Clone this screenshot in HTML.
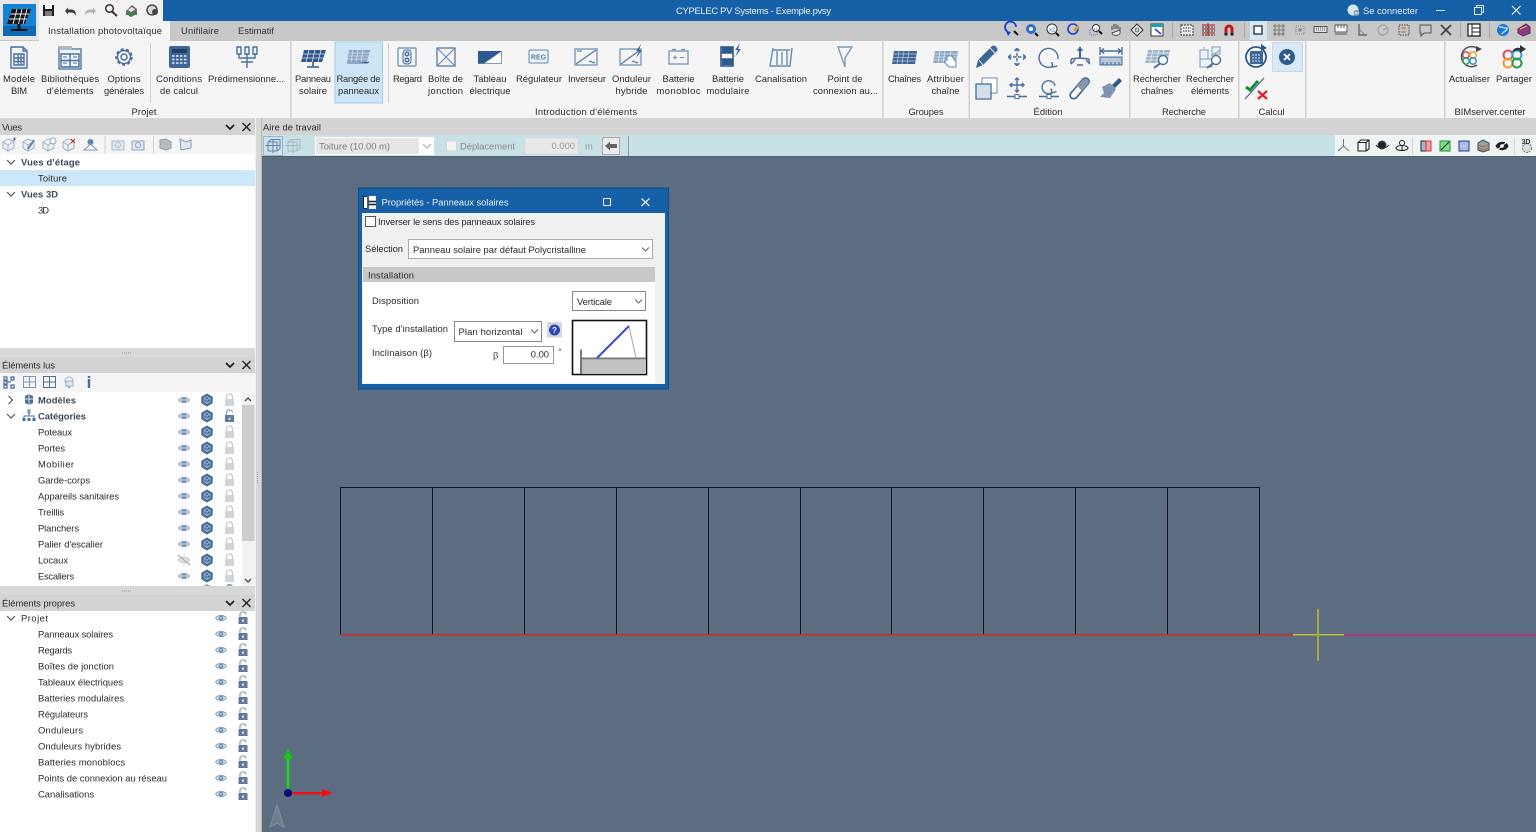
<!DOCTYPE html>
<html lang="fr"><head><meta charset="utf-8"><title>CYPELEC PV Systems - Exemple.pvsy</title>
<style>
html,body{margin:0;padding:0;width:1536px;height:832px;overflow:hidden;background:#5d6d81}
svg{display:block}
text{font-family:"Liberation Sans",sans-serif;font-size:9.4px;fill:#2a2a2a;filter:blur(.22px)}
.c{text-anchor:middle}
.b{font-weight:bold;fill:#3c4856}
.g{fill:#8a8a8a}
.w{fill:#e8eef6}
.i{fill:none;stroke:#4a6f9c;stroke-width:1.4}
.f{fill:#3f6796}
</style></head><body>
<svg width="1536" height="832" viewBox="0 0 1536 832" xmlns="http://www.w3.org/2000/svg">
<defs>
<g id="eye"><path d="M-5.5 0C-3 -3.5 3 -3.5 5.5 0C3 3.5 -3 3.5 -5.5 0Z" fill="#d4deea" stroke="#8aa2bb"/><circle r="2.3" fill="#6a8cae"/><circle r=".9" fill="#e8eef6"/></g>
<g id="hex"><path d="M0 -6.5L5.7 -3.2V3.2L0 6.5L-5.7 3.2V-3.2Z" fill="#41699a"/><path d="M0 -3.500L3 -1.700V1.700L0 3.500L-3 1.700V-1.700Z" fill="none" stroke="#a9bdd2" stroke-width=".9"/><path d="M0 0V3.500M0 0L-3 -1.700M0 0L3 -1.700" stroke="#a9bdd2" stroke-width=".8"/></g>
<g id="lock"><rect x="-4.5" y="-1" width="9" height="7" fill="#d0d5dc"/><path d="M-3 -1V-3.2C-3 -7 3 -7 3 -3.2V-1" fill="none" stroke="#c6cbd2" stroke-width="1.3"/></g>
<g id="lko"><rect x="-4.5" y="-1" width="9" height="7" fill="#5f7d9b"/><rect x="-1" y="1.5" width="2" height="2.5" fill="#cfdbe8"/><path d="M-3 -1V-3.2C-3 -7 3 -7 3 -3.5" fill="none" stroke="#8ea3b8" stroke-width="1.3"/></g>
<g id="chd"><path d="M-4 -2L0 2L4 -2" fill="none" stroke="#555" stroke-width="1.2"/></g>
<g id="xx"><path d="M-4 -4L4 4M4 -4L-4 4" stroke="#222" stroke-width="1.4"/></g>
<g id="hdv"><path d="M-4 -2L0 2L4 -2" fill="none" stroke="#222" stroke-width="1.8"/></g>
<g id="cube"><path d="M-6 -3L-1 -6L5 -4V3L-1 6L-6 3Z M-6 -3L-1 0L5 -4 M-1 0V6" fill="#e8eef4" fill-opacity=".6" stroke="#9db3c9"/></g>
<g id="bolt"><path d="M3 -7L-2 0H1L-2 7L4 -1H1Z" fill="#3f6796"/></g>
</defs>

<!-- Background bands -->
<rect width="1536" height="832" fill="#5d6d81"/>
<rect width="1536" height="21" fill="#1660a8"/>
<rect y="21" width="1536" height="20" fill="#c8c8c8"/>
<rect y="41" width="1536" height="77" fill="#f5f5f5"/>
<rect y="118" width="1536" height="17" fill="#d3d3d3"/>
<rect x="262" y="135" width="1274" height="22" fill="#c8e1e6"/>
<rect x="1335" y="135" width="201" height="22" fill="#eef3f4"/>
<rect x="262" y="156" width="1274" height="1" fill="#4f5e70"/>
<rect x="0" y="118" width="262" height="714" fill="#d8d8d8"/>

<!-- Quick access & app icon -->
<rect x="0" y="0" width="163" height="21" fill="#f2f2f2"/>
<rect x="0" y="0" width="39" height="40" fill="#e6e6e6"/>
<rect x="3" y="4" width="33" height="32" fill="#1583d4"/>
<rect x="3" y="26" width="33" height="10" fill="#0f68b4"/>
<path d="M12 9H31L25 24H7Z" fill="#141414"/>
<path d="M10.5 14H29M9 19H27M17 9L13 24M22 9L18.5 24M27 9L23 24" stroke="#e6eef6" stroke-width=".9"/>
<path d="M17.5 24H20.5V29H17.5ZM11 29H27V31H11Z" fill="#141414"/>
<rect x="43" y="5" width="11" height="11" fill="#1b1b1b"/><rect x="45" y="5" width="7" height="4" fill="#f2f2f2"/><rect x="45" y="11" width="7" height="5" fill="#7a7a7a"/>
<path d="M65 11L68 7.5V9.5H71C75 9.5 76 12 76 16C75 13 73.5 12.5 71 12.5H68V14.5Z" fill="#3a3a3a"/>
<path d="M96 11L93 7.5V9.5H90C86 9.5 85 12 85 16C86 13 87.500 12.500 90 12.500H93V14.500Z" fill="#b5b5b5"/>
<circle cx="109.500" cy="8.500" r="3.800" fill="none" stroke="#333" stroke-width="1.500"/><path d="M112 11.500L117 16" stroke="#333" stroke-width="2"/>
<path d="M126 11L132 5L137 9V14L131 17L126 14Z" fill="#6a6a6a"/><path d="M128 10L132 7L135 9.500L131 12Z" fill="#e8e8e8"/><rect x="126" y="13" width="11" height="2" fill="#2f8a3c"/>
<circle cx="152" cy="10" r="5" fill="#d8d8d8" stroke="#333" stroke-width="1.300"/><circle cx="155" cy="12" r="3" fill="#444"/>

<!-- Title texts -->
<text x="753.500" y="14" class="c w" textLength="155">CYPELEC PV Systems - Exemple.pvsy</text>
<circle cx="1353" cy="10" r="5.500" fill="#d8e6f0"/><circle cx="1356.500" cy="13" r="3" fill="#8a9aa8"/><rect x="1354.500" y="12.500" width="4" height="1" fill="#fff"/>
<text x="1363" y="14" class="w" textLength="55">Se connecter</text>
<rect x="1436" y="10" width="9" height="1" fill="#dfe8f2"/>
<path d="M1474.500 7.500h7v7h-7zM1476.500 7.500v-2h7v7h-2" fill="none" stroke="#dfe8f2"/>
<path d="M1512 6L1520.500 14.500M1520.500 6L1512 14.500" stroke="#e6eef6" stroke-width="1.200"/>

<!-- Tabs -->
<rect x="39" y="21" width="131" height="20" fill="#f5f5f5"/>
<text x="48" y="34" textLength="114">Installation photovoltaïque</text>
<text x="181" y="34" style="fill:#333" textLength="38">Unifilaire</text>
<text x="238" y="34" style="fill:#333" textLength="36">Estimatif</text>

<!-- Tab-bar right toolbar -->
<g transform="translate(0,30)">
<path d="M1008 2A5.500 5.500 0 1 1 1016 -3" fill="none" stroke="#1a3fd0" stroke-width="1.800"/><path d="M1006 1L1008 6L1011 2Z" fill="#1a3fd0"/><path d="M1014 1L1018 5" stroke="#111" stroke-width="2"/>
<circle cx="1031" cy="-1" r="5" fill="#2a6fd6"/><circle cx="1031" cy="-1" r="2" fill="#fff"/><path d="M1035 3L1038 6" stroke="#111" stroke-width="2"/>
<circle cx="1052" cy="-1" r="5" fill="#fff" stroke="#333"/><text x="1052" y="1.500" class="c" style="font-size:6px;fill:#2a6fd6">x2</text><path d="M1056 3L1059 6" stroke="#111" stroke-width="2"/>
<circle cx="1073" cy="-1" r="5" fill="none" stroke="#1a3fd0" stroke-width="1.600"/><path d="M1074 1L1079 -4" stroke="#c9a040" stroke-width="3"/>
<circle cx="1096" cy="-2" r="3.500" fill="#fff" stroke="#333"/><rect x="1090" y="-1" width="7" height="6" fill="none" stroke="#6a70d8" stroke-dasharray="1 1"/><path d="M1099 1L1102 4" stroke="#111" stroke-width="2"/>
<path d="M1112 0V-4M1114 -1V-6M1116 -1V-6M1118 -1V-5M1120 0V-3V3C1120 6 1112 6 1112 3Z" fill="#fff" stroke="#444"/>
<path d="M1137 -6L1140 -3L1143 0L1140 3L1137 6L1134 3L1131 0L1134 -3Z" fill="#e8e8e8" stroke="#333"/><circle cx="1137" cy="0" r="2" fill="#c8c8c8" stroke="#333" stroke-width=".6"/>
<rect x="1151" y="-6" width="12" height="12" fill="#fff" stroke="#333"/><rect x="1151" y="-6" width="12" height="3" fill="#1aa0b8"/><path d="M1155 -1L1161 4" stroke="#1a3fd0" stroke-width="1.600"/>
<rect x="1172" y="-8" width="1" height="16" fill="#a8a8a8"/>
<rect x="1181" y="-5" width="12" height="10" fill="#eee" stroke="#333" stroke-dasharray="2 1"/><path d="M1183 -2h8M1183 1h8" stroke="#333" stroke-dasharray="1.500 1"/>
<path d="M1202 -5h13M1202 -1h13M1202 3h13M1208 -7V6" stroke="#a82020"/><path d="M1202 -3h13M1202 1h13M1202 5h13" stroke="#333" stroke-dasharray="2 1"/>
<path d="M1225 5V-1A4 4 0 0 1 1233 -1V5H1231V-1A2 2 0 0 0 1227 -1V5Z" fill="#c01818" stroke="#c01818"/><rect x="1224.500" y="3" width="3" height="2.500" fill="#222"/><rect x="1230.500" y="3" width="3" height="2.500" fill="#222"/>
<rect x="1244" y="-8" width="1" height="16" fill="#a8a8a8"/>
<rect x="1250" y="-9" width="17" height="19" fill="#d5e5f2"/>
<rect x="1254" y="-4" width="8" height="8" fill="#fff" stroke="#2c3b48" stroke-width="1.400"/>
<path d="M1273 -4H1285M1273 0H1285M1273 4H1285M1275 -6V6M1279 -6V6M1283 -6V6" stroke="#777"/>
<rect x="1296" y="-4" width="8" height="8" fill="none" stroke="#888" stroke-dasharray="1 1"/><rect x="1298.500" y="-1.500" width="3" height="3" fill="#888"/>
<rect x="1314" y="-3.500" width="13" height="6" fill="#e4e4e4" stroke="#555"/><path d="M1316 -2h9M1316 0h9" stroke="#555" stroke-dasharray="1 1"/>
<rect x="1335" y="-5" width="12" height="7" fill="#fff" stroke="#555"/><path d="M1335 4H1347" stroke="#555"/><path d="M1338 -5v3M1341 -5v3M1344 -5v3" stroke="#555"/>
<path d="M1359 -6V5H1367" fill="none" stroke="#555" stroke-width="1.200"/><path d="M1359 -1L1365 5" stroke="#888"/>
<circle cx="1383" cy="0" r="5" fill="none" stroke="#999"/><path d="M1383 0L1387 -2" stroke="#999"/>
<rect x="1399" y="-5" width="10" height="10" fill="none" stroke="#444" stroke-dasharray="1.500 1"/><path d="M1401 -2h5M1401 2h5" stroke="#c06020"/>
<path d="M1420 -5H1431V3H1424L1421 6V3H1420Z" fill="none" stroke="#555"/>
<path d="M1441 -5L1451 5M1451 -5L1441 5" stroke="#444" stroke-width="1.800"/>
<rect x="1460" y="-8" width="1" height="16" fill="#a8a8a8"/>
<rect x="1468" y="-6" width="12" height="12" fill="#fff" stroke="#222" stroke-width="1.300"/><path d="M1472 -6V6M1472 -2H1480M1472 2H1480" stroke="#222"/>
<rect x="1489" y="-8" width="1" height="16" fill="#a8a8a8"/>
<circle cx="1503" cy="0" r="6" fill="#1b78cf"/><path d="M1499 -3C1503 -4 1504 -1 1507 -2C1507 2 1503 1 1502 4" fill="none" stroke="#a8dcff" stroke-width="1.500"/>
<path d="M1518 -1L1526 -6L1530 -3V3L1523 6L1518 3Z" fill="#8a3a8a" stroke="#5a2a5a"/><path d="M1520 -1L1527 -4" stroke="#e8c040"/>
</g>

<!-- Ribbon separators -->
<g fill="#d0d0d0">
<rect x="150" y="43" width="1" height="60"/><rect x="290" y="41" width="1.500" height="77"/>
<rect x="388" y="43" width="1" height="60"/><rect x="882" y="41" width="1.500" height="77"/>
<rect x="968.500" y="41" width="1.500" height="77"/><rect x="1129" y="41" width="1.500" height="77"/>
<rect x="1238" y="41" width="1.500" height="77"/><rect x="1305" y="41" width="1.500" height="77"/>
<rect x="1444" y="41" width="1.500" height="77"/>
</g>
<rect x="335" y="42" width="47.500" height="61" fill="#cde6f7" stroke="#a4cde2"/>
<rect x="1272.500" y="42.500" width="30" height="29" fill="#d8e8f6" stroke="#c4d8ea"/>

<!-- Ribbon icons -->
<path class="i" d="M11 47H23L27 51V68H11ZM23 47V51H27"/><path class="i" d="M14 54H24V65H14ZM14 58H24M14 61.500H24M18 54V65M21 54V65" stroke-width=".9"/>
<path d="M59 47H70L72 49H81V69H59Z" fill="#f0f3f7" stroke="#4a6f9c" stroke-width="1.300"/><rect x="59" y="46" width="13" height="4" fill="#b0bac5"/><path class="i" d="M61 54H79V67H61ZM70 54V67M61 60.500H79" stroke-width=".9"/><path d="M63 57h4M73 57h4M63 63h4M73 63h4" stroke="#4a6f9c"/>
<circle cx="124" cy="57" r="7.500" fill="none" stroke="#4a6f9c" stroke-width="2.400" stroke-dasharray="3 2.300"/><circle cx="124" cy="57" r="6.500" class="i"/><circle cx="124" cy="57" r="3" class="i"/>
<rect x="169" y="46" width="21" height="22" rx="2" fill="#3f6796"/><rect x="172" y="49" width="15" height="4" fill="#1f3f66"/><path d="M172 56h15M172 59.500h15M172 63h15" stroke="#e6edf5" stroke-width="1.500" stroke-dasharray="2.500 1.500"/>
<path class="i" d="M237 47h4v7h-4zM245 47h4v7h-4zM253 47h4v7h-4zM239 54v4h16v-4M247 54V68M241 62h12"/>
<path d="M304 50H326L322 62H301Z" fill="#2f5788"/><path d="M303 54H325M302 58H324M309 50L306 62M315 50L312 62M321 50L318 62" stroke="#d6e2ef" stroke-width=".8"/><path d="M313 62V66M307 67H319" stroke="#2f5788" stroke-width="1.600"/>
<path d="M349 50H370L367 62H347Z" fill="#8aa2bf"/><path d="M348 53H370M348 56H369M347 59H368M353 50L351 62M358 50L356 62M363 50L361 62" stroke="#dbe7f0" stroke-width=".7"/><path d="M347 63H367L369 62" stroke="#4a6f9c"/>
<rect x="398" y="48" width="18" height="18" rx="1" class="i" style="stroke:#7d9ab8"/><rect x="403" y="50" width="8" height="14" rx="3" fill="#dde6f0" stroke="#4a6f9c"/><circle cx="407" cy="54" r="1.800" class="i"/><circle cx="407" cy="60" r="1.800" class="i"/>
<rect x="437" y="48" width="18" height="18" class="i" style="stroke:#5f85ad"/><path class="i" style="stroke:#5f85ad;stroke-width:1" d="M437 48L455 66M455 48L437 66"/>
<rect x="478.500" y="51.500" width="23" height="12" fill="#fff" stroke="#7d9ab8"/><path d="M478 51H502L484 63.500H478Z" fill="#2d5a8e"/>
<rect x="529" y="50" width="19" height="13" rx="1" fill="#eef3f8" stroke="#5f85ad"/><text x="538.500" y="59.500" class="c" style="font-size:7px;font-weight:bold;fill:#5f85ad">REG</text>
<rect x="575" y="49" width="22" height="16" class="i" style="stroke:#7d9ab8"/><path class="i" d="M576 64L596 50M589 62c1-1 2-1 3 0s2 1 3 0" style="stroke:#6a8cae" stroke-width="1"/><path d="M577 51h5" stroke="#4a6f9c"/>
<rect x="620" y="49" width="21" height="16" class="i" style="stroke:#7d9ab8"/><path class="i" d="M621 64L640 50M632 62c1-1 2-1 3 0s2 1 3 0" style="stroke:#6a8cae" stroke-width="1"/><use href="#bolt" transform="translate(638,51)"/>
<rect x="669" y="51" width="19" height="13" class="i" style="stroke:#7f9dbb"/><path d="M672 49.500h4M681 49.500h4" stroke="#7f9dbb" stroke-width="1.400"/><path d="M673 57.500h4M675 55.500v4M680 57.500h4" stroke="#6a8cae"/>
<rect x="721" y="47" width="12" height="19" fill="#fff" stroke="#2d5a8e" stroke-width="1.600"/><path d="M721 53H733M721 59H733" stroke="#2d5a8e" stroke-width="1.600"/><rect x="722" y="47.500" width="11" height="5" fill="#2d5a8e"/><rect x="722" y="59" width="11" height="6" fill="#2d5a8e"/><use href="#bolt" transform="translate(737,50)"/>
<path class="i" style="stroke:#6a8cae" d="M773 48L770 66H790L792 48M777 51V65M782 52V65M787 51V65M773 50H790"/>
<path class="i" style="stroke:#7d9ab8" d="M838 47H852L845 58V67ZM845 58V67"/>
<path d="M894 51H917L915 64H892Z" fill="#3f6796"/><path d="M893 54H916M893 57.500H916M892 61H915M899 51L897 64M904 51L902 64M909 51L907 64" stroke="#b9cbdd" stroke-width=".7"/>
<path d="M935 51H958L956 63H933Z" fill="#8fa9c4"/><path d="M934 54H957M934 57H957M933 60H956M940 51L938 63M945 51L943 63M951 51L949 63" stroke="#dbe7f0" stroke-width=".7"/><path d="M949 56L952 56L956 62V67H949L944 62L947 60V56Z" fill="#fff" stroke="#5f85ad"/>

<!-- Edition icons -->
<path d="M976 68L978 60L992 46C995 44 999 49 997 51L983 65Z" fill="#3f6796"/><path d="M979 60L983 65M990 48L995 53" stroke="#e6edf5"/>
<path class="i" d="M1017 48V66M1008 57H1026M1014.500 51L1017 48L1019.500 51M1014.500 63L1017 66L1019.500 63M1011 54.500L1008 57L1011 59.500M1023 54.500L1026 57L1023 59.500" stroke-dasharray="3.500 1.500"/>
<path class="i" d="M1053 66.300A9.500 9.500 0 1 1 1058 59" stroke-width="1.700"/><path class="i" d="M1052 62L1052.500 67L1057.500 66"/>
<path class="f" d="M1080 46L1083 51H1081V58H1079V51H1077Z"/><path class="i" d="M1071 59L1080 58L1089 59M1071 64L1075 60M1086 60L1090 64M1071 59V64M1089 59V64M1077 65H1083"/>
<rect x="1100" y="57" width="22" height="8" fill="#b7c6d8" stroke="#3f6796"/><path d="M1103 62v3M1107 62v3M1111 62v3M1115 62v3M1119 62v3" stroke="#3f6796"/><path class="i" d="M1100 47V55M1122 47V55M1101 51H1121M1104 48.500L1101 51L1104 53.500M1118 48.500L1121 51L1118 53.500" stroke-width="1.100"/>
<rect x="982" y="78" width="15" height="15" fill="#fff" stroke="#6d8cad"/><rect x="976" y="84" width="15" height="15" fill="#d6deea" stroke="#4a6f9c" stroke-width="1.300"/>
<path class="i" d="M1017 78V93M1010 85H1024M1015 80L1017 78L1019 80M1015 90L1017 92L1019 90M1012 83L1010 85L1012 87M1022 83L1024 85L1022 87M1007 96.500H1027" stroke-width="1.100"/><rect x="1015" y="94.500" width="4" height="4" fill="#fff" stroke="#4a6f9c"/>
<path class="i" d="M1053 92A6.500 6.500 0 1 1 1055 86" stroke-width="1.500"/><path class="i" d="M1051 88.500L1052 93L1056.500 91.500"/><path class="i" d="M1039 96.500H1059" stroke-width="1.100"/><rect x="1047" y="94.500" width="4" height="4" fill="#fff" stroke="#4a6f9c"/>
<path d="M1071 93L1083 79C1087 76 1091 81 1088 84L1076 98C1071 100 1069 96 1071 93Z" fill="#fff" stroke="#3f6796" stroke-width="1.700"/><path d="M1077 86L1083 79.500C1087 77 1090 81 1088 84L1082 91Z" fill="#8a97a6"/>
<path d="M1112 85L1119 78L1122 81L1115 88Z" fill="#2d5a8e"/><path d="M1102 87L1110 83L1116 89L1110 98L1100 97L1104 93Z" fill="#8095b2"/>

<!-- Search icons -->
<path d="M1148 50H1170L1167 63H1145Z" fill="#a0b5cc"/><path d="M1147 53H1169M1146 56.500H1169M1146 60H1168M1153 50L1150 63M1159 50L1156 63M1164 50L1161 63" stroke="#e4edf4" stroke-width=".7"/><circle cx="1163" cy="60" r="4.500" fill="#fff" stroke="#4a6f9c" stroke-width="1.400"/><path d="M1160 63.500L1154 68" stroke="#4a6f9c" stroke-width="2"/>
<rect x="1200" y="50" width="8" height="9" fill="#eef3f8" stroke="#7d9ab8"/><rect x="1212" y="47" width="8" height="7" fill="#eef3f8" stroke="#7d9ab8"/><rect x="1200" y="59" width="12" height="8" fill="#eef3f8" stroke="#7d9ab8"/><path d="M1204 47V49M1211 56L1220 50" stroke="#7d9ab8"/><circle cx="1216" cy="60" r="4.500" fill="#fff" stroke="#4a6f9c" stroke-width="1.400"/><path d="M1213 63.500L1207 68" stroke="#4a6f9c" stroke-width="2"/>

<!-- Calcul icons -->
<circle cx="1256" cy="57" r="10" fill="none" stroke="#2d5a8e" stroke-width="1.800"/><rect x="1250" y="51" width="13" height="13" rx="1" fill="#3f6796"/><path d="M1252 55h9M1252 58h9M1252 61h9" stroke="#e6edf5" stroke-dasharray="2 1"/><path d="M1261 44L1267 48L1261 51Z" fill="#2d5a8e"/>
<circle cx="1287" cy="57" r="8" fill="#2d5a8e"/><path d="M1284 54L1290 60M1290 54L1284 60" stroke="#fff" stroke-width="1.800"/>
<path d="M1246 87L1250 90L1258 81" fill="none" stroke="#1a8a3c" stroke-width="3"/><path d="M1245 99L1264 78" stroke="#3f6796" stroke-width="1.200"/><path d="M1258 91L1267 99M1267 91L1258 99" stroke="#e01e30" stroke-width="2.200"/>

<!-- BIM icons -->
<path d="M1478 49A10 10 0 1 0 1477 65" fill="none" stroke="#555" stroke-width="1.600"/><path d="M1476 46L1482 49L1476 52Z" fill="#444"/>
<circle cx="1466" cy="55" r="3.200" fill="none" stroke="#d94a6c" stroke-width="1.500"/><circle cx="1473" cy="55" r="3.200" fill="none" stroke="#e8a030" stroke-width="1.500"/><circle cx="1466" cy="61" r="3.200" fill="none" stroke="#2c9c6a" stroke-width="1.500"/><circle cx="1473" cy="61" r="3.200" fill="none" stroke="#3a8ac8" stroke-width="1.500"/>
<circle cx="1508" cy="55" r="4.500" fill="none" stroke="#d94a6c" stroke-width="2"/><circle cx="1517" cy="55" r="4.500" fill="none" stroke="#2f9fd8" stroke-width="2"/><circle cx="1508" cy="63" r="4.500" fill="none" stroke="#e8a030" stroke-width="2"/><circle cx="1517" cy="63" r="4.500" fill="none" stroke="#2c9c4a" stroke-width="2"/><path d="M1512 52C1513 49 1516 47 1520 48V45L1526 49L1520 53V50.500C1517 50 1514 51 1512 52Z" fill="#333"/>

<!-- Ribbon labels -->
<text x="19" y="82" class="c" textLength="32">Modèle</text><text x="19" y="94" class="c" textLength="16">BIM</text>
<text x="70" y="82" class="c" textLength="58">Bibliothèques</text><text x="70" y="94" class="c" textLength="47">d'éléments</text>
<text x="124" y="82" class="c" textLength="33">Options</text><text x="124" y="94" class="c" textLength="40">générales</text>
<text x="179" y="82" class="c" textLength="46">Conditions</text><text x="179" y="94" class="c" textLength="38">de calcul</text>
<text x="246" y="82" class="c" textLength="76">Prédimensionne...</text>
<text x="313" y="82" class="c" textLength="36">Panneau</text><text x="313" y="94" class="c" textLength="28">solaire</text>
<text x="358.500" y="82" class="c" textLength="44">Rangée de</text><text x="358.500" y="94" class="c" textLength="41">panneaux</text>
<text x="407.500" y="82" class="c" textLength="29">Regard</text>
<text x="445.500" y="82" class="c" textLength="35">Boîte de</text><text x="445.500" y="94" class="c" textLength="35">jonction</text>
<text x="490" y="82" class="c" textLength="33">Tableau</text><text x="490" y="94" class="c" textLength="41">électrique</text>
<text x="539" y="82" class="c" textLength="46">Régulateur</text>
<text x="587" y="82" class="c" textLength="38">Inverseur</text>
<text x="631.500" y="82" class="c" textLength="39">Onduleur</text><text x="631.500" y="94" class="c" textLength="32">hybride</text>
<text x="678.500" y="82" class="c" textLength="32">Batterie</text><text x="678.500" y="94" class="c" textLength="44">monobloc</text>
<text x="728" y="82" class="c" textLength="32">Batterie</text><text x="728" y="94" class="c" textLength="43">modulaire</text>
<text x="781" y="82" class="c" textLength="52">Canalisation</text>
<text x="845" y="82" class="c" textLength="35">Point de</text><text x="845.500" y="94" class="c" textLength="65">connexion au...</text>
<text x="904.500" y="82" class="c" textLength="33">Chaînes</text>
<text x="945.500" y="82" class="c" textLength="37">Attribuer</text><text x="945.500" y="94" class="c" textLength="28">chaîne</text>
<text x="1157" y="82" class="c" textLength="48">Rechercher</text><text x="1157" y="94" class="c" textLength="32">chaînes</text>
<text x="1210" y="82" class="c" textLength="48">Rechercher</text><text x="1210" y="94" class="c" textLength="38">éléments</text>
<text x="1469.500" y="82" class="c" textLength="41">Actualiser</text>
<text x="1514" y="82" class="c" textLength="36">Partager</text>
<text x="144" y="115" class="c" textLength="25">Projet</text>
<text x="586" y="115" class="c" textLength="102">Introduction d'éléments</text>
<text x="926" y="115" class="c" textLength="35">Groupes</text>
<text x="1048" y="115" class="c" textLength="29">Édition</text>
<text x="1184" y="115" class="c" textLength="44">Recherche</text>
<text x="1271.500" y="115" class="c" textLength="26">Calcul</text>
<text x="1490" y="115" class="c" textLength="71">BIMserver.center</text>

<!-- Left panels -->
<rect x="0" y="135" width="255" height="19" fill="#f5f5f5"/>
<rect x="0" y="154" width="255" height="194" fill="#fff"/>
<rect x="0" y="170" width="255" height="16" fill="#cce6fa"/>
<rect x="0" y="373" width="255" height="19" fill="#f5f5f5"/>
<rect x="0" y="392" width="255" height="194" fill="#fff"/>
<rect x="0" y="611" width="255" height="221" fill="#fff"/>
<rect x="0" y="119" width="255" height="16" fill="#d3d3d3"/>
<rect x="0" y="357" width="255" height="16" fill="#d3d3d3"/>
<rect x="0" y="595" width="255" height="16" fill="#d3d3d3"/>
<rect x="255" y="118" width="1" height="714" fill="#f0f0f0"/>
<rect x="261" y="118" width="1" height="714" fill="#b8b8b8"/>
<path d="M122 353h9M122 591h9" stroke="#999" stroke-dasharray="1 1"/>
<path d="M257.500 472v12" stroke="#999" stroke-dasharray="1 1"/>

<!-- Vues -->
<text x="2" y="130.500" textLength="20">Vues</text><use href="#hdv" x="230" y="127"/><use href="#xx" x="246.500" y="127"/>
<text x="263" y="130.500" textLength="58">Aire de travail</text>
<g transform="translate(0,145)">
<use href="#cube" x="9"/><path d="M13 -6h3M14.500 -7.500v3" stroke="#4a6f9c"/>
<use href="#cube" x="29"/><path d="M28 4L34 -5" stroke="#5f85ad" stroke-width="2"/>
<use href="#cube" x="49"/><circle cx="53" cy="-4" r="3" fill="#fff" stroke="#8ea8c2"/>
<use href="#cube" x="69"/><path d="M71 -6L75 -2M75 -6L71 -2" stroke="#d02030"/>
<circle cx="90.500" cy="-3" r="3" fill="#5f85ad"/><path d="M84 5L90.500 -1L97 5H84Z" fill="none" stroke="#7d97b3"/>
<rect x="104.500" y="-9" width="1" height="18" fill="#d0d0d0"/>
<rect x="112" y="-4" width="12" height="9" fill="#e0e8f0" stroke="#a8bdd1"/><circle cx="118" cy="0" r="2.500" fill="none" stroke="#a8bdd1"/>
<rect x="132" y="-4" width="12" height="9" fill="#dde6f0" stroke="#8ea8c2"/><circle cx="138" cy="0" r="2.500" fill="none" stroke="#8ea8c2"/>
<rect x="153" y="-9" width="1" height="18" fill="#d0d0d0"/>
<path d="M160 -5L166 -6L171 -3V3L166 5L160 3Z" fill="#b5bdc6" stroke="#999"/>
<path d="M180 -6L186 -3L191 -5V3L186 4L181 5Z" fill="#e0e8f0" stroke="#7d97b3"/>
</g>
<use href="#chd" x="11" y="162"/><text x="21" y="165.500" class="b" textLength="59">Vues d'étage</text>
<text x="38" y="181.500" textLength="29">Toiture</text>
<use href="#chd" x="11" y="194"/><text x="21" y="197.500" class="b" textLength="37">Vues 3D</text>
<text x="38" y="213.500" textLength="11">3D</text>

<!-- Eléments lus -->
<text x="2" y="368.500" textLength="53">Éléments lus</text><use href="#hdv" x="230" y="365"/><use href="#xx" x="246.500" y="365"/>
<g transform="translate(0,382)" fill="none" stroke="#4a6f9c">
<path d="M4 -5h3v3h-3zM4 -1h3v3h-3zM4 3h3v3h-3zM11 -5h3v3h-3zM11 3h3v3h-3zM7 0h4" stroke-width="1.200"/>
<rect x="23.500" y="-5.500" width="12" height="11" stroke="#7d97b3"/><path d="M29.500 -5.500V5.500M23.500 0H35.500" stroke="#7d97b3"/>
<rect x="43.500" y="-5.500" width="12" height="11"/><path d="M49.500 -5.500V5.500M43.500 0H55.500"/>
<circle cx="69" cy="-1" r="4" stroke="#9cb2c9"/><path d="M66 3L70 6" stroke="#5f85ad"/><rect x="66" y="-1" width="7" height="5" fill="#dde6f0" stroke="#9cb2c9"/>
<path d="M89 -6v2M89 -3v9" stroke-width="2.400"/>
</g>
<g transform="translate(0,400)">
<path d="M8.500 -4L12.500 0L8.500 4" fill="none" stroke="#555" stroke-width="1.200"/>
<path d="M25 -4L29 -6L33 -4V3L29 5L25 3Z" fill="#4a6f9c"/><path d="M25 -1H33M29 -6V5" stroke="#fff" stroke-width=".7"/>
<text x="38" y="3.500" class="b" textLength="38">Modèles</text>
</g>
<g transform="translate(0,416)">
<use href="#chd" x="11"/>
<path d="M28 -6h2v3h-2zM29 -3V0M24 4V0H34V4" fill="none" stroke="#4a6f9c"/><rect x="22.500" y="2" width="3" height="3" fill="#4a6f9c"/><rect x="27.500" y="2" width="3" height="3" fill="#4a6f9c"/><rect x="32.500" y="2" width="3" height="3" fill="#4a6f9c"/>
<text x="38" y="3.500" class="b" textLength="48">Catégories</text>
</g>
<text x="38" y="435.500" textLength="34">Poteaux</text><text x="38" y="451.500" textLength="27">Portes</text><text x="38" y="467.500" textLength="36">Mobilier</text><text x="38" y="483.500" textLength="52">Garde-corps</text><text x="38" y="499.500" textLength="81">Appareils sanitaires</text><text x="38" y="515.500" textLength="26">Treillis</text><text x="38" y="531.500" textLength="41">Planchers</text><text x="38" y="547.500" textLength="65">Palier d'escalier</text><text x="38" y="563.500" textLength="30">Locaux</text><text x="38" y="579.500" textLength="36">Escaliers</text>
<use href="#eye" x="184" y="400"/><use href="#hex" x="207" y="400"/><use href="#lock" x="229.500" y="400"/>
<use href="#eye" x="184" y="416"/><use href="#hex" x="207" y="416"/><use href="#lko" x="229.500" y="416"/>
<use href="#eye" x="184" y="432"/><use href="#hex" x="207" y="432"/><use href="#lock" x="229.500" y="432"/>
<use href="#eye" x="184" y="448"/><use href="#hex" x="207" y="448"/><use href="#lock" x="229.500" y="448"/>
<use href="#eye" x="184" y="464"/><use href="#hex" x="207" y="464"/><use href="#lock" x="229.500" y="464"/>
<use href="#eye" x="184" y="480"/><use href="#hex" x="207" y="480"/><use href="#lock" x="229.500" y="480"/>
<use href="#eye" x="184" y="496"/><use href="#hex" x="207" y="496"/><use href="#lock" x="229.500" y="496"/>
<use href="#eye" x="184" y="512"/><use href="#hex" x="207" y="512"/><use href="#lock" x="229.500" y="512"/>
<use href="#eye" x="184" y="528"/><use href="#hex" x="207" y="528"/><use href="#lock" x="229.500" y="528"/>
<use href="#eye" x="184" y="544"/><use href="#hex" x="207" y="544"/><use href="#lock" x="229.500" y="544"/>
<g transform="translate(184,560)"><path d="M-5.500 0C-3 -3.500 3 -3.500 5.500 0C3 3.500 -3 3.500 -5.500 0Z" fill="#e8e8e8" stroke="#bbb"/><path d="M-6 -5L6 5" stroke="#aaa" stroke-width="1.200"/></g><use href="#hex" x="207" y="560"/><use href="#lock" x="229.500" y="560"/>
<use href="#eye" x="184" y="576"/><use href="#hex" x="207" y="576"/><use href="#lock" x="229.500" y="576"/>
<path d="M203 586L207 584L211 586ZM226 586C227 583 232 583 233 586" fill="#8faac4"/>
<rect x="242" y="392" width="13" height="194" fill="#f2f2f2"/>
<rect x="242" y="405" width="12.500" height="136" fill="#cdcdcd"/>
<path d="M245 401L248 398L251 401M245 579L248 582L251 579" fill="none" stroke="#444" stroke-width="1.300"/>

<!-- Eléments propres -->
<text x="2" y="606.500" textLength="73">Éléments propres</text><use href="#hdv" x="230" y="603"/><use href="#xx" x="246.500" y="603"/>
<use href="#chd" x="11" y="618"/><text x="21" y="621.500" textLength="27">Projet</text>
<text x="38" y="637.500" textLength="75">Panneaux solaires</text><text x="38" y="653.500" textLength="34">Regards</text><text x="38" y="669.500" textLength="76">Boîtes de jonction</text><text x="38" y="685.500" textLength="85">Tableaux électriques</text><text x="38" y="701.500" textLength="86">Batteries modulaires</text><text x="38" y="717.500" textLength="50">Régulateurs</text><text x="38" y="733.500" textLength="45">Onduleurs</text><text x="38" y="749.500" textLength="83">Onduleurs hybrides</text><text x="38" y="765.500" textLength="87">Batteries monoblocs</text><text x="38" y="781.500" textLength="129">Points de connexion au réseau</text><text x="38" y="797.500" textLength="56">Canalisations</text>
<use href="#eye" x="221" y="618"/><use href="#lko" x="243" y="618"/>
<use href="#eye" x="221" y="634"/><use href="#lko" x="243" y="634"/>
<use href="#eye" x="221" y="650"/><use href="#lko" x="243" y="650"/>
<use href="#eye" x="221" y="666"/><use href="#lko" x="243" y="666"/>
<use href="#eye" x="221" y="682"/><use href="#lko" x="243" y="682"/>
<use href="#eye" x="221" y="698"/><use href="#lko" x="243" y="698"/>
<use href="#eye" x="221" y="714"/><use href="#lko" x="243" y="714"/>
<use href="#eye" x="221" y="730"/><use href="#lko" x="243" y="730"/>
<use href="#eye" x="221" y="746"/><use href="#lko" x="243" y="746"/>
<use href="#eye" x="221" y="762"/><use href="#lko" x="243" y="762"/>
<use href="#eye" x="221" y="778"/><use href="#lko" x="243" y="778"/>
<use href="#eye" x="221" y="794"/><use href="#lko" x="243" y="794"/>

<!-- Workspace toolbar -->
<rect x="263.500" y="136.500" width="19" height="19" fill="#cfe0ec" stroke="#8fb8d0"/>
<path d="M268 142H277V151H268ZM265.500 145.500H280M273 139V153M268 142L271 139.500H280V148.500L277 151" fill="none" stroke="#5f85ad"/>
<path d="M288 142H297V151H288ZM285.500 145.500H300M293 139V153M288 142L291 139.500H300V148.500L297 151" fill="none" stroke="#a5b8c6"/>
<rect x="315" y="137" width="119" height="18" fill="#fff"/>
<rect x="316" y="138" width="103" height="16" fill="#e6e6e6"/>
<text x="319" y="149.500" style="fill:#7a7a7a" textLength="71">Toiture (10.00 m)</text>
<path d="M423 144L427 148L431 144" fill="none" stroke="#a8a8a8" stroke-width="1.100"/>
<rect x="446.500" y="141" width="10" height="10" fill="#f4f4f4" stroke="#d4d4d4"/>
<text x="460" y="149.500" class="g" textLength="55">Déplacement</text>
<rect x="525" y="138" width="53" height="16" fill="#e9e9e9" stroke="#dadada"/>
<text x="575" y="149" text-anchor="end" style="fill:#999">0.000</text>
<text x="585" y="149.500" style="fill:#999">m</text>
<rect x="602.500" y="137.500" width="17" height="17" fill="#ececec" stroke="#aaa"/>
<path d="M605 146L610 141.500V144H617V148H610V150.500Z" fill="#666"/>
<rect x="628" y="136" width="1" height="20" fill="#8f9ba2"/>
<g transform="translate(0,146)" fill="none" stroke="#3d4a56">
<path d="M1343.500 0L1338 5M1343.500 0L1349 5M1343.500 -7V0" stroke="#66788a"/>
<path d="M1358 -3.500H1366V5H1358ZM1358 -3.500L1361 -6H1369V3L1366 5M1366 -3.500L1369 -6" stroke-width="1.100" stroke="#222"/>
<circle cx="1382" cy="-1" r="4" fill="#222"/><path d="M1376 -1C1378 3 1386 3 1389 -1" stroke="#222"/>
<circle cx="1402" cy="-3" r="2.500" stroke="#222"/><ellipse cx="1402" cy="2" rx="6" ry="2.500" stroke="#222"/><path d="M1402 -1V5" stroke="#222"/>
<rect x="1412" y="-9" width="1" height="18" fill="#d8d8d8" stroke="none"/>
<rect x="1421" y="-5" width="5" height="10" fill="#9fb8d0" stroke="#222"/><rect x="1426" y="-5" width="5" height="10" fill="#f4a0a8" stroke="#e03040"/>
<rect x="1440" y="-5" width="10" height="10" fill="#7fe08a" stroke="#228a3c"/><path d="M1441 4L1449 -4" stroke="#222"/>
<rect x="1459" y="-5" width="10" height="10" fill="#a8b8e8" stroke="#223a8a"/><path d="M1461 0h6" stroke="#fff" stroke-dasharray="1 1"/>
<path d="M1483 -6L1489 -3V4L1483 6L1478 4V-3Z" fill="#8aa8a0" stroke="#446"/><path d="M1478 -1L1483 1L1489 -1M1478 2L1483 4L1489 2" stroke="#c06040"/>
<path d="M1496 0C1499 -5 1506 -5 1508 0C1506 5 1499 5 1496 0Z" fill="#222" stroke="#222"/><circle cx="1502" cy="0" r="1.800" fill="#fff" stroke="none"/><path d="M1497 4L1507 -4" stroke="#fff"/>
<rect x="1514" y="-9" width="1" height="18" fill="#d8d8d8" stroke="none"/>
<circle cx="1527" cy="2" r="4.500" fill="#ddd" stroke="#777" stroke-dasharray="2 1"/>
<text x="1526" y="-2" class="c" style="font-size:7px;fill:#333;stroke:none;font-weight:bold">3D</text>
</g>

<!-- Canvas geometry -->
<g fill="none" stroke="#10121c" stroke-width="1">
<path d="M340.500 635V487.500H1259.500V635"/>
<path d="M432.500 487.500V635M524.500 487.500V635M616.500 487.500V635M708.500 487.500V635M800.500 487.500V635M891.500 487.500V635M983.500 487.500V635M1075.500 487.500V635M1167.500 487.500V635"/>
</g>
<rect x="340" y="634" width="953" height="1.500" fill="#cf2c28"/>
<rect x="1293" y="634" width="51" height="1.500" fill="#bfbf2e"/>
<rect x="1344" y="634" width="192" height="1.500" fill="#c42680"/>
<rect x="1317" y="609" width="2" height="52" fill="#a9a93e"/>

<!-- Axes -->
<rect x="286.800" y="758" width="2.400" height="35" fill="#10e010"/>
<path d="M288 748L292 759H284Z" fill="#10c810"/>
<rect x="288" y="792" width="36" height="2.400" fill="#f01010"/>
<path d="M333 793L322 789V797Z" fill="#f01010"/>
<circle cx="288" cy="793" r="4" fill="#0a0a80"/>
<path d="M277 805L284 827L277 823L270 827Z" fill="#6f7c8c" stroke="#858f9c"/>

<!-- Dialog -->
<rect x="358.500" y="188" width="310" height="201" fill="#1660a8" stroke="#0e4c8c"/>
<rect x="362" y="213" width="303" height="171" fill="#f0f0f0"/>
<rect x="363" y="196" width="13" height="13" fill="#f0f4f8"/><path d="M368 196V209M368 201.500H376M368 204.500H376" stroke="#15253a" stroke-width="1.400"/><rect x="363" y="196" width="4" height="13" fill="#15253a"/><rect x="364" y="197" width="3" height="11" fill="#fff"/><rect x="369" y="197" width="6" height="3.500" fill="#fff" />
<text x="381.500" y="205.500" class="w" textLength="127">Propriétés - Panneaux solaires</text>
<rect x="603.500" y="198.500" width="7" height="7" fill="none" stroke="#e8eef6"/>
<path d="M641.500 198.500L649.500 206M649.500 198.500L641.500 206" stroke="#e8eef6" stroke-width="1.200"/>
<rect x="365.500" y="216.500" width="10" height="10" fill="#fff" stroke="#555"/>
<text x="378" y="225" textLength="157">Inverser le sens des panneaux solaires</text>
<text x="365" y="252" textLength="38">Sélection</text>
<rect x="408.500" y="239.500" width="244" height="19" fill="#fff" stroke="#aaa"/>
<text x="413" y="253" textLength="173">Panneau solaire par défaut Polycristalline</text>
<path d="M642 247.500L645.500 251L649 247.500" fill="none" stroke="#666" stroke-width="1.100"/>
<rect x="363" y="267" width="292" height="116" fill="#fff"/>
<rect x="363" y="267" width="292" height="15" fill="#c8c8c8"/>
<text x="368" y="278.500" textLength="46">Installation</text>
<text x="372" y="304" textLength="47">Disposition</text>
<rect x="572.500" y="291.500" width="73" height="19" fill="#fff" stroke="#888"/>
<text x="577" y="305" textLength="35">Verticale</text>
<path d="M635 299.500L638.500 303L642 299.500" fill="none" stroke="#666" stroke-width="1.100"/>
<text x="372" y="332" textLength="76">Type d'installation</text>
<rect x="454.500" y="321.500" width="87" height="20" fill="#fff" stroke="#888"/>
<text x="458.500" y="335" textLength="64">Plan horizontal</text>
<path d="M531 329.500L534.500 333L538 329.500" fill="none" stroke="#666" stroke-width="1.100"/>
<rect x="547" y="322" width="15" height="15.500" fill="#d4d8dc"/><circle cx="554.500" cy="330" r="5.500" fill="#2848b8"/><text x="554.500" y="333" class="c" style="font-size:8px;font-weight:bold;fill:#fff">?</text>
<text x="372" y="356" textLength="60">Inclinaison (β)</text>
<text x="493" y="358.500" style="fill:#444">β</text>
<rect x="503.500" y="346.500" width="50" height="17" fill="#fff" stroke="#999"/>
<text x="549" y="357.500" text-anchor="end">0.00</text>
<text x="558" y="355" style="fill:#444">°</text>
<rect x="572.500" y="320.500" width="74" height="54" fill="#fff" stroke="#111" stroke-width="1.600"/>
<rect x="581" y="358" width="65" height="15" fill="#c2c2c2"/>
<rect x="581" y="357.500" width="65" height="1.800" fill="#777"/>
<rect x="580" y="349.500" width="2" height="24" fill="#777"/>
<path d="M629 326L636 358" stroke="#aaa"/>
<path d="M597 358L629 326" stroke="#3c48d0" stroke-width="2"/>
</svg>
</body></html>
